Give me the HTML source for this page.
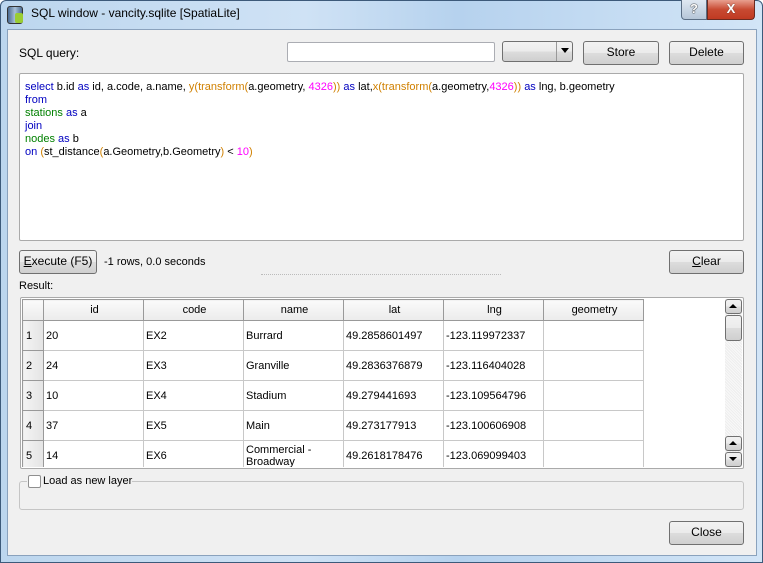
<!DOCTYPE html>
<html><head><style>
*{box-sizing:border-box;margin:0;padding:0}
body{width:763px;height:563px;overflow:hidden;background:#fff;font-family:"Liberation Sans",sans-serif;font-size:11px;color:#000;position:relative}
.frame{position:absolute;left:0;top:0;width:763px;height:563px;background:linear-gradient(90deg,#bcd6ee 0%,#cfe2f5 40%,#b6d2ee 60%,#d2e5f7 100%);border:1px solid #3d5a7a;border-radius:6px 6px 0 0}
.client{position:absolute;left:7px;top:29px;width:750px;height:527px;background:#f0f0f0;border:1px solid #8aa2bd}
.a{position:absolute}
.btn{position:absolute;border:1px solid #707070;border-radius:3px;background:linear-gradient(#f2f2f2,#ebebeb 50%,#dddddd 50%,#cfcfcf);text-align:center;font-size:12px;line-height:21px}
.editor{position:absolute;left:19px;top:73px;width:725px;height:168px;background:#fff;border:1px solid #aaa;border-radius:2px;padding:7px 5px;font-size:11px;line-height:13px}
.k{color:#0000c0}.f{color:#d08000}.n{color:#ff00ff}.g{color:#008000}
table{border-collapse:collapse;position:absolute;left:22px;top:299px;background:#fff}
td,th{border:1px solid #c8c8c8;height:30px;font-weight:normal;text-align:left;padding-left:2px;font-size:11px;line-height:12px}
th{height:21px;background:linear-gradient(#fafafa,#ebebeb);text-align:center;border-color:#999}
td.rh{background:linear-gradient(90deg,#f4f4f4,#e4e4e4);border-color:#999;padding-left:3px}
</style></head><body>
<div class="frame"></div>
<div class="a" style="left:7px;top:6px;width:16px;height:18px;border-radius:3px;background:linear-gradient(90deg,#4a6a90,#a8c0d8,#4a6a90);border:1px solid #333"></div>
<div class="a" style="left:15px;top:13px;width:8px;height:10px;background:#9acd32;border-radius:2px"></div>
<div class="a" style="left:31px;top:6px;font-size:12px">SQL window - vancity.sqlite [SpatiaLite]</div>
<div class="a" style="left:681px;top:0;width:26px;height:20px;border:1px solid #5a6d84;border-top:0;border-radius:0 0 0 4px;background:linear-gradient(#dfe8f2,#b6c6d8);text-align:center;font-weight:bold;font-size:13px;color:#fff;text-shadow:0 0 1px #000,0 0 1px #000;line-height:18px">?</div>
<div class="a" style="left:707px;top:0;width:48px;height:20px;border:1px solid #6b2a20;border-top:0;border-radius:0 0 4px 0;background:linear-gradient(#e8a090,#c84a32 50%,#c03a22);text-align:center;font-weight:bold;font-size:13px;color:#fff;text-shadow:0 0 1px #333;line-height:18px">X</div>
<div class="client"></div>
<div class="a" style="left:19px;top:46px;font-size:12px">SQL query:</div>
<div class="a" style="left:287px;top:42px;width:208px;height:20px;background:#fff;border:1px solid #abadb3;border-radius:2px"></div>
<div class="btn" style="left:502px;top:41px;width:71px;height:21px"></div>
<div class="a" style="left:556px;top:42px;width:1px;height:19px;background:#999"></div>
<div class="a" style="left:561px;top:48px;width:0;height:0;border-left:4px solid transparent;border-right:4px solid transparent;border-top:5px solid #000"></div>
<div class="btn" style="left:583px;top:41px;width:76px;height:24px">Store</div>
<div class="btn" style="left:669px;top:41px;width:75px;height:24px">Delete</div>
<div class="editor"><span class="k">select</span> b.id <span class="k">as</span> id, a.code, a.name, <span class="f">y(transform(</span>a.geometry, <span class="n">4326</span><span class="f">))</span> <span class="k">as</span> lat,<span class="f">x(transform(</span>a.geometry,<span class="n">4326</span><span class="f">))</span> <span class="k">as</span> lng, b.geometry<br><span class="k">from</span><br><span class="g">stations</span> <span class="k">as</span> a<br><span class="k">join</span><br><span class="g">nodes</span> <span class="k">as</span> b<br><span class="k">on</span> <span class="f">(</span>st_distance<span class="f">(</span>a.Geometry,b.Geometry<span class="f">)</span> &lt; <span class="n">10</span><span class="f">)</span></div>
<div class="btn" style="left:19px;top:250px;width:78px;height:24px"><u>E</u>xecute (F5)</div>
<div class="a" style="left:104px;top:256px;font-size:11px">-1 rows, 0.0 seconds</div>
<div class="a" style="left:261px;top:274px;width:240px;border-top:1px dotted #bbb"></div>
<div class="btn" style="left:669px;top:250px;width:75px;height:24px"><u>C</u>lear</div>
<div class="a" style="left:19px;top:280px;font-size:11px">Result:</div>
<div class="a" style="left:20px;top:297px;width:724px;height:172px;background:#fff;border:1px solid #aaa;border-radius:2px;overflow:hidden">
</div>
<div class="a" style="left:22px;top:299px;width:702px;height:168px;overflow:hidden">
<table style="left:0;top:0">
<tr><th style="width:21px"></th><th style="width:100px">id</th><th style="width:100px">code</th><th style="width:100px">name</th><th style="width:100px">lat</th><th style="width:100px">lng</th><th style="width:100px">geometry</th></tr>
<tr><td class="rh">1</td><td>20</td><td>EX2</td><td>Burrard</td><td>49.2858601497</td><td>-123.119972337</td><td></td></tr>
<tr><td class="rh">2</td><td>24</td><td>EX3</td><td>Granville</td><td>49.2836376879</td><td>-123.116404028</td><td></td></tr>
<tr><td class="rh">3</td><td>10</td><td>EX4</td><td>Stadium</td><td>49.279441693</td><td>-123.109564796</td><td></td></tr>
<tr><td class="rh">4</td><td>37</td><td>EX5</td><td>Main</td><td>49.273177913</td><td>-123.100606908</td><td></td></tr>
<tr><td class="rh">5</td><td>14</td><td>EX6</td><td>Commercial -<br>Broadway</td><td>49.2618178476</td><td>-123.069099403</td><td></td></tr>
</table></div>
<div class="a" style="left:725px;top:299px;width:17px;height:168px;background:repeating-linear-gradient(45deg,#eee 0 1px,#f8f8f8 1px 2px)"></div>
<div class="btn" style="left:725px;top:299px;width:17px;height:15px"></div>
<div class="a" style="left:729px;top:304px;border-left:4px solid transparent;border-right:4px solid transparent;border-bottom:4px solid #000"></div>
<div class="btn" style="left:725px;top:315px;width:17px;height:26px"></div>
<div class="btn" style="left:725px;top:436px;width:17px;height:15px"></div>
<div class="a" style="left:729px;top:441px;border-left:4px solid transparent;border-right:4px solid transparent;border-bottom:4px solid #000"></div>
<div class="btn" style="left:725px;top:452px;width:17px;height:15px"></div>
<div class="a" style="left:729px;top:457px;border-left:4px solid transparent;border-right:4px solid transparent;border-top:4px solid #000"></div>
<div class="a" style="left:19px;top:481px;width:725px;height:29px;border:1px solid #c5c5c5;border-radius:3px"></div>
<div class="a" style="left:27px;top:474px;width:105px;height:14px;background:#f0f0f0"></div>
<div class="a" style="left:28px;top:475px;width:13px;height:13px;background:#fff;border:1px solid #8f8f8f;border-radius:2px"></div>
<div class="a" style="left:43px;top:475px;font-size:11px">Load as new layer</div>
<div class="btn" style="left:669px;top:521px;width:75px;height:24px">Close</div>
</body></html>
